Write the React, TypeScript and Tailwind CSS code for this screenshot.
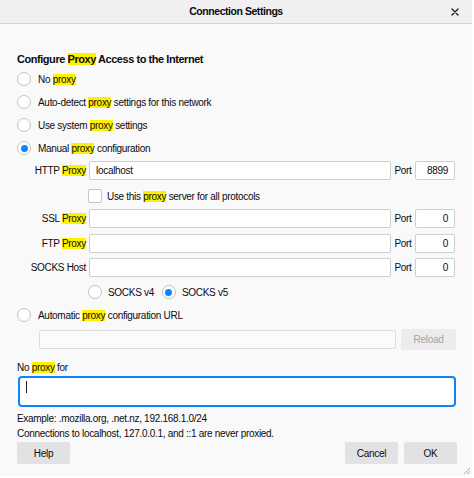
import React from 'react';

const font = { fontFamily: '"Liberation Sans", Arial, sans-serif' };

function Hl({ children }: { children: React.ReactNode }) {
  return <span className="bg-[#fff000]">{children}</span>;
}

function Radio({ checked = false }: { checked?: boolean }) {
  return (
    <span className="flex h-[14px] w-[14px] shrink-0 items-center justify-center rounded-full border border-[#c4c4c6] bg-white">
      {checked && <span className="h-[7px] w-[7px] rounded-full bg-[#0a84ff]" />}
    </span>
  );
}

function RadioRow({ checked, children }: { checked?: boolean; children: React.ReactNode }) {
  return (
    <div className="flex h-[20px] items-center gap-[7px] pl-[16px]">
      <Radio checked={checked} />
      <span>{children}</span>
    </div>
  );
}

function ProxyRow({ label, value, port, mt }: { label: React.ReactNode; value?: string; port: string; mt: string }) {
  return (
    <div className={`flex h-[19px] items-center ${mt}`}>
      <span className="w-[88px] shrink-0 pr-[3px] text-right">{label}</span>
      <div className="flex h-[19px] w-[302px] items-center rounded-[2px] border border-[#cfcfd1] bg-white pl-[6px]">{value}</div>
      <span className="w-[24px] shrink-0 text-center">Port</span>
      <div className="flex h-[19px] w-[40px] items-center justify-end rounded-[2px] border border-[#cfcfd1] bg-white pr-[6px]">{port}</div>
    </div>
  );
}

export default function App() {
  return (
    <div className="h-[478px] w-[474px] bg-white text-[10px] tracking-[-0.3px] text-[#0c0c0d]" style={font}>
      <div className="relative h-[476px] w-[472px] bg-[#f9f9fa]">
        <div className="relative flex h-[24px] items-center justify-center border-b border-[#d4d4d6] bg-[#f0f0f2]">
          <span className="text-[10.5px] font-bold tracking-[-0.45px]">Connection Settings</span>
          <svg className="absolute left-[451px] top-[8px]" width="8" height="8" viewBox="0 0 8 8">
            <path d="M1 1 L7 7 M7 1 L1 7" stroke="#222" strokeWidth="1.4" strokeLinecap="round" />
          </svg>
        </div>

        <div className="flex flex-col pl-[1px]">
          <div className="mt-[25px] flex h-[20px] items-center pl-[16px] text-[11px] font-bold tracking-[-0.45px]">
            <span>Configure <Hl>Proxy</Hl> Access to the Internet</span>
          </div>
          <div className="flex flex-col gap-[3px]">
            <RadioRow>No <Hl>proxy</Hl></RadioRow>
            <RadioRow>Auto-detect <Hl>proxy</Hl> settings for this network</RadioRow>
            <RadioRow>Use system <Hl>proxy</Hl> settings</RadioRow>
            <RadioRow checked>Manual <Hl>proxy</Hl> configuration</RadioRow>
          </div>

          <ProxyRow mt="mt-[3px]" label={<>HTTP <Hl>Proxy</Hl></>} value="localhost" port="8899" />

          <div className="mt-[6px] flex h-[20px] items-center gap-[5px] pl-[87px]">
            <span className="h-[14px] w-[14px] rounded-[2px] border border-[#c4c4c6] bg-white" />
            <span>Use this <Hl>proxy</Hl> server for all protocols</span>
          </div>

          <ProxyRow mt="mt-[3px]" label={<>SSL <Hl>Proxy</Hl></>} port="0" />
          <ProxyRow mt="mt-[6px]" label={<>FTP <Hl>Proxy</Hl></>} port="0" />
          <ProxyRow mt="mt-[5px]" label="SOCKS Host" port="0" />

          <div className="mt-[5px] flex h-[20px] items-center pl-[87px]">
            <Radio />
            <span className="ml-[6px]">SOCKS v4</span>
            <span className="ml-[8px]"><Radio checked /></span>
            <span className="ml-[6px]">SOCKS v5</span>
          </div>

          <div className="mt-[3px]">
            <RadioRow>Automatic <Hl>proxy</Hl> configuration URL</RadioRow>
          </div>

          <div className="mt-[5px] flex h-[19px] items-center pl-[38px]">
            <div className="h-[19px] w-[357px] rounded-[2px] border border-[#dcdcde] bg-[#fbfbfb]" />
            <div className="ml-[5px] flex h-[21px] w-[55px] items-center justify-center rounded-[2px] bg-[#ececee] text-[#a3a3a5]">Reload</div>
          </div>

          <div className="mt-[10px] flex h-[16px] items-center pl-[16px]">
            <span>No <Hl>proxy</Hl> for</span>
          </div>

          <div className="ml-[17px] mt-[1px] flex h-[31px] w-[438px] items-start rounded-[4px] border-2 border-[#0a84ff] bg-white pl-[6px] pt-[3px]">
            <span className="h-[12px] w-px bg-[#222]" />
          </div>

          <div className="mt-[4px] flex h-[15px] items-center pl-[16px]">Example: .mozilla.org, .net.nz, 192.168.1.0/24</div>
          <div className="flex h-[15px] items-center pl-[16px]">Connections to localhost, 127.0.0.1, and ::1 are never proxied.</div>

          <div className="mt-[1px] flex h-[22px] items-center pl-[16px] pr-[15px]">
            <div className="flex h-[22px] w-[53px] items-center justify-center rounded-[2px] bg-[#e2e2e4]">Help</div>
            <div className="flex-1" />
            <div className="flex h-[22px] w-[53px] items-center justify-center rounded-[2px] bg-[#e2e2e4]">Cancel</div>
            <div className="ml-[6px] flex h-[22px] w-[53px] items-center justify-center rounded-[2px] bg-[#e2e2e4]">OK</div>
          </div>
        </div>

        <svg className="absolute bottom-[1px] right-[1px]" width="8" height="8" viewBox="0 0 8 8">
          <path d="M7 1 L1 7 M7 4 L4 7 M7 6.5 L6.5 7" stroke="#9a9a9c" strokeWidth="0.8" />
        </svg>
      </div>
    </div>
  );
}
